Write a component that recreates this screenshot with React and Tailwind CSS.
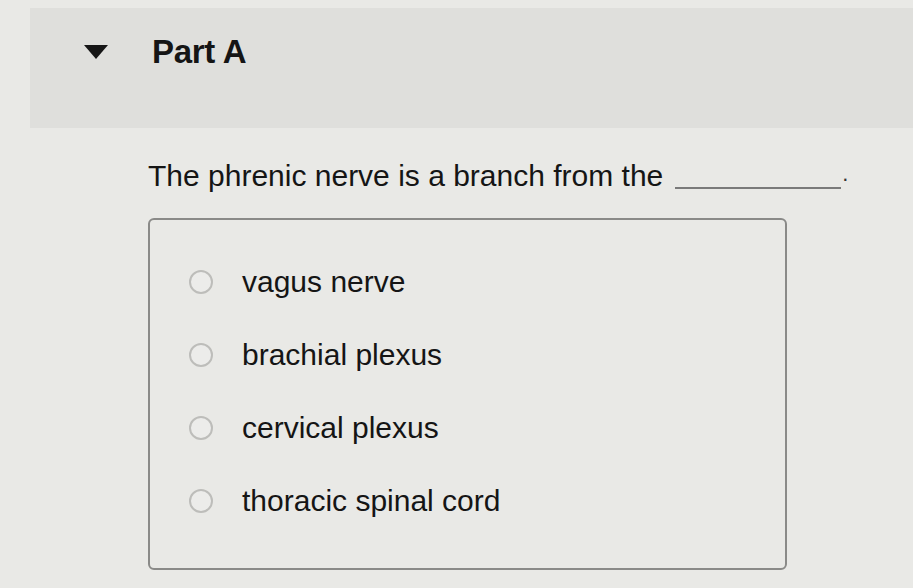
const options = ["vagus nerve", "brachial plexus", "cervical plexus", "thoracic spinal cord"];

function Radio() {
  return (
    <span className="block w-[24px] h-[24px] shrink-0 rounded-full border-2 border-[#bdbdba] bg-[#ececea]" />
  );
}

export default function App() {
  return (
    <div className="w-[913px] h-[588px] overflow-hidden bg-[#e9e9e6] pt-[8px] font-['Liberation_Sans',Arial,sans-serif] text-[#151515]">
      {/* Part header */}
      <div className="ml-[30px] h-[120px] bg-[#dfdfdc] pt-[26px]">
        <div className="flex items-center h-[36px]">
          <svg width="24" height="14" viewBox="0 0 24 14" className="ml-[54px]">
            <polygon points="0,0 24,0 12,14" fill="#161616" />
          </svg>
          <h2 className="ml-[44px] text-[33px] leading-[36px] font-bold tracking-[-0.3px]">Part A</h2>
        </div>
      </div>

      {/* Question */}
      <div className="ml-[148px] mt-[30px]">
        <p className="text-[30px] leading-[36px] flex items-end">
          <span>The phrenic nerve is a branch from the</span>
          <span className="inline-block w-[166px] ml-[12px] mb-[5px] border-b-2 border-[#7a7a7a]" />
          <span className="text-[22px] leading-[22px] mb-[9px] ml-[1px] text-[#333]">.</span>
        </p>

        <div className="mt-[24px] w-[639px] h-[352px] border-2 border-[#8a8a88] rounded-[6px] pt-[44px] pl-[39px]">
          <div className="flex flex-col gap-[37px]">
            {options.map((o) => (
              <label key={o} className="flex items-center h-[36px]">
                <Radio />
                <span className="ml-[29px] text-[30px] leading-[36px]">{o}</span>
              </label>
            ))}
          </div>
        </div>
      </div>
    </div>
  );
}
